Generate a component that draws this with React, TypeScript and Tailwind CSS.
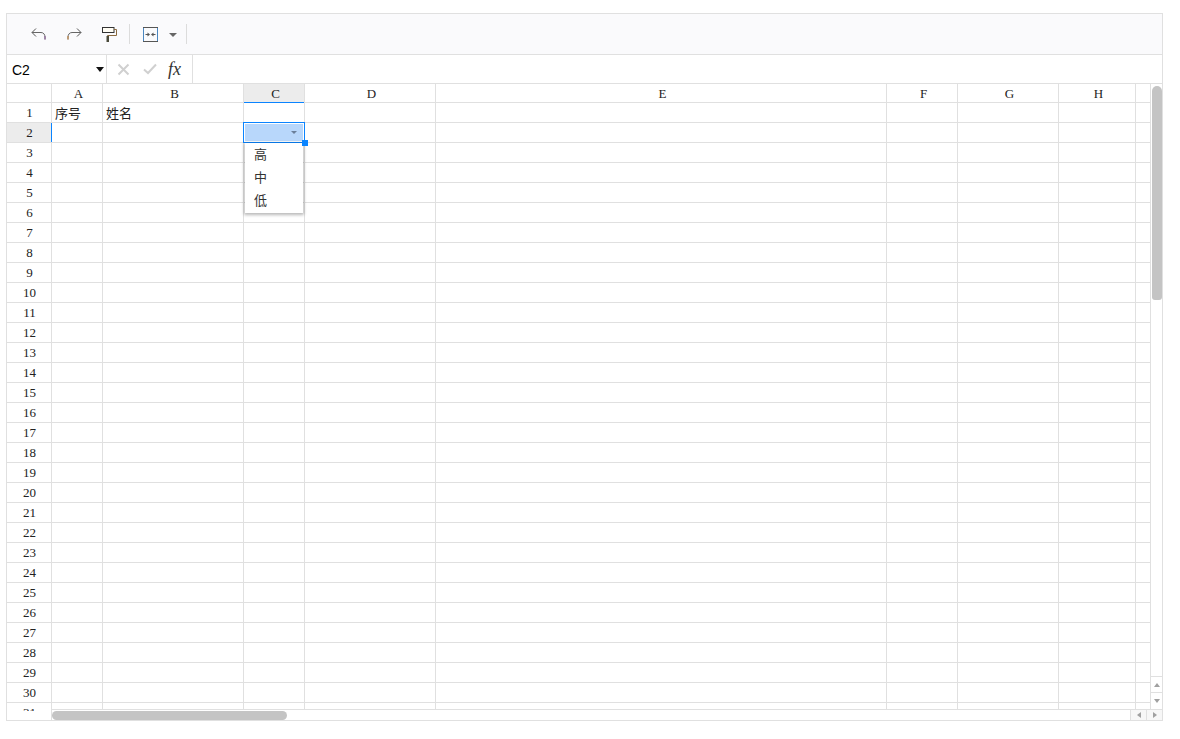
import React from "react";

const cols: [string, number][] = [
  ["A", 51], ["B", 141], ["C", 61], ["D", 131], ["E", 451], ["F", 71], ["G", 101], ["H", 77], ["", 60],
];
const rows = Array.from({ length: 31 }, (_, i) => i + 1);
const line = "border-[#e0e0e0]";

function Undo({ flip }: { flip?: boolean }) {
  return (
    <svg width="15" height="12" viewBox="0 0 15 12" fill="none" className={`-mt-[1px] ${flip ? "-scale-x-100" : ""}`}>
      <path d="M5 0.5 L1 4.5 L5 8.5" stroke="#555" />
      <path d="M1 4.5 H10 C12.5 4.5 14 6.5 14 9 V11.5" stroke="#666" />
      <path d="M14 8 V11.5" stroke={flip ? "#c8843c" : "#8a5a9a"} />
    </svg>
  );
}

function Dropdown() {
  return (
    <div className="absolute left-[2px] top-[21px] z-10 w-[58px] h-[70px] bg-white shadow-[0_1px_3px_1px_rgba(0,0,0,0.28)]">
      {["高", "中", "低"].map((t) => (
        <div key={t} className="h-[23px] pl-[9px] leading-[23px] text-[13px] text-[#333]">{t}</div>
      ))}
    </div>
  );
}

export default function App() {
  return (
    <div className="pt-[13px] pl-[6px] bg-white h-[739px] w-[1180px] font-['Liberation_Serif','Noto_Sans_CJK_SC',serif] text-[13px] text-[#222]">
      <div className={`w-[1157px] h-[708px] border ${line} flex flex-col overflow-hidden`}>
        {/* toolbar */}
        <div className={`h-[41px] shrink-0 bg-[#fafafc] border-b ${line} flex items-center pl-[24px]`}>
          <div className="w-[15px] flex"><Undo /></div>
          <div className="w-[15px] ml-[21px] flex"><Undo flip /></div>
          <svg width="15" height="15" viewBox="0 0 15 15" fill="none" className="ml-[20px]">
            <rect x="0.5" y="0.5" width="11.5" height="5" fill="#fffdf5" stroke="#333" />
            <path d="M12 2.5 H14.5 V8.5 H5.5 V10" stroke="#8a6a40" />
            <rect x="4.5" y="9" width="2.5" height="6" fill="#4a4a3a" />
          </svg>
          <div className="w-px h-[20px] bg-[#dcdcdc] ml-[12px]" />
          <svg width="15" height="15" viewBox="0 0 15 15" fill="none" className="ml-[13px]">
            <path d="M0.5 0 V15 M14.5 0 V15" stroke="#4a86c0" />
            <path d="M0 0.5 H15 M0 14.5 H15" stroke="#555" />
            <path d="M2.5 7.5 H5 M10 7.5 H12.5" stroke="#555" />
            <path d="M4.5 5.5 L7 7.5 L4.5 9.5 Z M10.5 5.5 L8 7.5 L10.5 9.5 Z" fill="#555" />
          </svg>
          <svg width="8" height="4" viewBox="0 0 8 4" className="ml-[11px] mt-[2px]"><path d="M0 0 H8 L4 4 Z" fill="#666" /></svg>
          <div className="w-px h-[20px] bg-[#dcdcdc] ml-[9px]" />
        </div>
        {/* formula bar */}
        <div className={`h-[29px] shrink-0 border-b ${line} flex items-stretch font-['Liberation_Sans',sans-serif]`}>
          <div className={`w-[100px] border-r ${line} flex items-center pl-[5px] pr-[2px] justify-between`}>
            <span className="text-[14px] text-black pt-[2px]">C2</span>
            <svg width="8" height="5" viewBox="0 0 8 5"><path d="M0 0 H8 L4 5 Z" fill="#111" /></svg>
          </div>
          <div className={`w-[86px] border-r ${line} flex items-center pl-[10px]`}>
            <svg width="13" height="13" viewBox="0 0 13 13"><path d="M1.5 1.5 L11.5 11.5 M11.5 1.5 L1.5 11.5" stroke="#d0d0d0" strokeWidth="2" /></svg>
            <svg width="14" height="12" viewBox="0 0 14 12" className="ml-[13px]"><path d="M1 6.5 L5 10 L13 1.5" stroke="#d0d0d0" strokeWidth="2" fill="none" /></svg>
            <span className="ml-[11px] text-[18px] italic font-['Liberation_Serif',serif] text-[#333]">fx</span>
          </div>
          <div className="flex-1" />
        </div>
        {/* sheet */}
        <div className="flex h-[627px] shrink-0">
          <div className="flex-1 min-w-0 overflow-hidden">
            <div className={`flex h-[19px] border-b ${line}`}>
              <div className={`w-[45px] shrink-0 border-r ${line}`} />
              {cols.map(([c, w]) => (
                <div
                  key={c || "x"}
                  style={{ width: w }}
                  className={`shrink-0 border-r ${line} text-center pl-[3px] leading-[20px] ${c === "C" ? "bg-[#ececec] relative" : ""}`}
                >
                  {c}
                  {c === "C" && <div className="absolute left-0 right-0 -bottom-px h-px bg-[#0a84ff]" />}
                </div>
              ))}
            </div>
            {rows.map((r) => (
              <div key={r} className={`flex h-[20px] border-b ${line}`}>
                <div className={`w-[45px] shrink-0 border-r ${line} text-center pl-[1px] leading-[19px] relative ${r === 2 ? "bg-[#ececec]" : ""}`}>
                  {r}
                  {r === 2 && <div className="absolute -right-px top-0 bottom-0 w-px bg-[#0a84ff]" />}
                </div>
                {cols.map(([c, w]) => (
                  <div key={c || "x"} style={{ width: w }} className={`shrink-0 border-r ${line} pl-[3px] leading-[22px] relative`}>
                    {r === 1 && c === "A" && "序号"}
                    {r === 1 && c === "B" && "姓名"}
                    {r === 2 && c === "C" && (
                      <div className="absolute -left-px -top-px w-[62px] h-[21px]">
                        <div className="h-full border border-[#0a84ff] p-px">
                          <div className="h-full bg-[#b8d7fb] flex items-center justify-end pr-[6px]">
                            <svg width="6" height="3" viewBox="0 0 6 3"><path d="M0 0 H6 L3 3 Z" fill="#6a7f9a" /></svg>
                          </div>
                        </div>
                        <div className="absolute -right-[3px] -bottom-[3px] w-[6px] h-[6px] bg-[#0a84ff] z-20" />
                        <Dropdown />
                      </div>
                    )}
                  </div>
                ))}
              </div>
            ))}
          </div>
          {/* vertical scrollbar */}
          <div className={`w-[12px] shrink-0 border-l ${line} flex flex-col`}>
            <div className="flex-1 pl-[1px] pt-[2px]">
              <div className="w-[10px] h-[214px] bg-[#c4c4c4] rounded-t-[5px] rounded-b-[3px]" />
            </div>
            <div className={`h-[16px] border-t ${line} flex items-center justify-center`}>
              <svg width="6" height="4" viewBox="0 0 6 4"><path d="M0 4 H6 L3 0 Z" fill="#a0a0a0" /></svg>
            </div>
            <div className={`h-[19px] pb-[2px] border-t ${line} flex items-center justify-center`}>
              <svg width="6" height="4" viewBox="0 0 6 4"><path d="M0 0 H6 L3 4 Z" fill="#a0a0a0" /></svg>
            </div>
          </div>
        </div>
        {/* horizontal scrollbar, pulled up over the clipped last row */}
        <div className="relative -mt-[2px] flex flex-1 min-h-0">
          <div className={`w-[45px] shrink-0 border-r ${line} relative`}>
            <div className="absolute left-0 right-0 bottom-0 h-[9px] bg-white" />
          </div>
          <div className={`flex-1 border-t ${line} bg-white flex items-center`}>
            <div className="w-[235px] h-[9px] rounded-[5px] bg-[#c4c4c4]" />
          </div>
          <div className={`w-[16px] border-l border-t ${line} bg-[#f7f7f7] flex items-center justify-center`}>
            <svg width="4" height="6" viewBox="0 0 4 6"><path d="M4 0 V6 L0 3 Z" fill="#a0a0a0" /></svg>
          </div>
          <div className={`w-[16px] border-l border-t ${line} bg-[#f7f7f7] flex items-center justify-center`}>
            <svg width="4" height="6" viewBox="0 0 4 6"><path d="M0 0 V6 L4 3 Z" fill="#a0a0a0" /></svg>
          </div>
        </div>
      </div>
    </div>
  );
}
